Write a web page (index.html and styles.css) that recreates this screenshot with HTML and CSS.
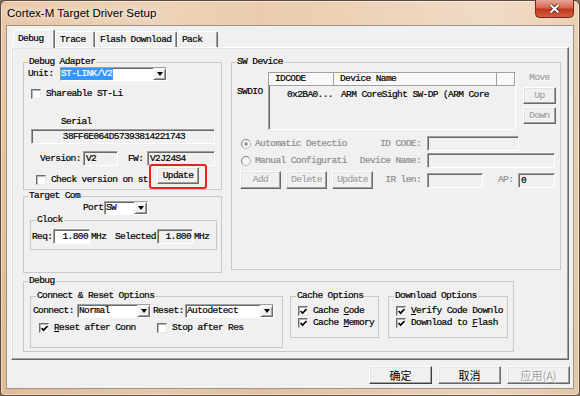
FILE: index.html
```html
<!DOCTYPE html>
<html lang="en">
  <head>
    <meta charset="UTF-8" />
    <meta name="viewport" content="width=device-width, initial-scale=1.0" />
    <title>Cortex-M Target Driver Setup</title>
    <link rel="stylesheet" href="styles.css">
  </head>

  <body>
    <div class="window">
      <div class="titlebar">
        <span class="title">Cortex-M Target Driver Setup</span>
        <div class="close-btn">
          <svg width="39" height="18" viewBox="0 0 39 18">
            <defs>
              <linearGradient id="close-bg" x1="0" y1="0" x2="0" y2="1">
                <stop offset="0" stop-color="#e9a897" />
                <stop offset="0.45" stop-color="#d66450" />
                <stop offset="0.52" stop-color="#c0361f" />
                <stop offset="1" stop-color="#d7603f" />
              </linearGradient>
            </defs>
            <path d="M0.5 0 V13.5 Q0.5 17.5 4.5 17.5 H34.5 Q38.5 17.5 38.5 13.5 V0" fill="url(#close-bg)" stroke="#6d2a1c" />
            <path d="M15.5 5 L23.5 12.5 M23.5 5 L15.5 12.5" stroke="#3b2b28" stroke-width="3.6" />
            <path d="M15.5 5 L23.5 12.5 M23.5 5 L15.5 12.5" stroke="#ffffff" stroke-width="1.9" />
          </svg>
        </div>
      </div>

      <div class="client">
        <div class="tabs">
          <div class="tab tab-debug active">Debug</div>
          <div class="tab tab-trace">Trace</div>
          <div class="tab tab-flash">Flash Download</div>
          <div class="tab tab-pack">Pack</div>
        </div>

        <div class="page">
          <div class="top-row">
            <div class="left-col">
              <fieldset class="group adapter">
                <legend>Debug Adapter</legend>
                <div class="unit-row">
                  <span class="unit-label">Unit:</span>
                  <div class="combo unit-combo">
                    <span class="combo-text"><span class="selected-text">ST-LINK/V2</span></span>
                    <span class="drop"></span>
                  </div>
                </div>
                <div class="check share-check">
                  <span class="box"></span>
                  <span class="share-text">Shareable ST-Li</span>
                </div>
                <div class="serial-label">Serial</div>
                <div class="edit ro serial">38FF6E064D57393814221743</div>
                <div class="version-row">
                  <span class="ver-label">Version:</span>
                  <div class="edit ro ver-field">V2</div>
                  <span class="fw-label">FW:</span>
                  <div class="edit ro fw-field">V2J24S4</div>
                </div>
                <div class="update-row">
                  <div class="check version-check">
                    <span class="box"></span>
                    <span class="version-text">Check version on st</span>
                  </div>
                  <div class="mark">
                    <button class="btn update-btn">Update</button>
                  </div>
                </div>
              </fieldset>

              <fieldset class="group target">
                <legend>Target Com</legend>
                <div class="port-row">
                  <span class="port-label">Port</span>
                  <div class="combo port-combo">
                    <span class="combo-text">SW</span>
                    <span class="drop"></span>
                  </div>
                </div>
                <fieldset class="group clock">
                  <legend>Clock</legend>
                  <div class="clock-row">
                    <span class="req-label">Req:</span>
                    <div class="edit num">1.800</div>
                    <span class="mhz">MHz</span>
                    <span class="sel-label">Selected</span>
                    <div class="edit ro num sel-field">1.800</div>
                    <span class="mhz">MHz</span>
                  </div>
                </fieldset>
              </fieldset>
            </div>

            <fieldset class="group sw">
              <legend>SW Device</legend>
              <div class="sw-top">
                <span class="swdio">SWDIO</span>
                <div class="listview">
                  <div class="lv-head">
                    <span class="lv-col c1">IDCODE</span>
                    <span class="lv-col c2">Device Name</span>
                    <span class="lv-col c3"></span>
                  </div>
                  <div class="lv-row">
                    <span class="c1">0x2BA0...</span>
                    <span class="c2">ARM CoreSight SW-DP (ARM Core</span>
                  </div>
                </div>
                <div class="move-col">
                  <span class="move-label">Move</span>
                  <button class="btn disabled up-btn">Up</button>
                  <button class="btn disabled down-btn">Down</button>
                </div>
              </div>

              <div class="sw-row row-auto">
                <span class="radio">
                  <svg width="10" height="10" viewBox="0 0 10 10">
                    <circle cx="5" cy="5" r="4.5" fill="#f6f6f6" stroke="#b4b4b4" />
                    <path d="M1.8 8.2 A4.5 4.5 0 0 1 8.2 1.8" fill="none" stroke="#8a8a8a" />
                    <circle cx="5" cy="5" r="1.7" fill="#8c8c8c" />
                  </svg>
                </span>
                <span class="radio-text">Automatic Detectio</span>
                <span class="sw-label">ID CODE:</span>
                <div class="edit ro id-field"></div>
              </div>
              <div class="sw-row row-manual">
                <span class="radio">
                  <svg width="10" height="10" viewBox="0 0 10 10">
                    <circle cx="5" cy="5" r="4.5" fill="#f6f6f6" stroke="#b4b4b4" />
                    <path d="M1.8 8.2 A4.5 4.5 0 0 1 8.2 1.8" fill="none" stroke="#8a8a8a" />
                  </svg>
                </span>
                <span class="radio-text">Manual Configurati</span>
                <span class="sw-label">Device Name:</span>
                <div class="edit ro name-field"></div>
              </div>
              <div class="sw-row row-buttons">
                <button class="btn disabled sw-btn">Add</button>
                <button class="btn disabled sw-btn">Delete</button>
                <button class="btn disabled sw-btn">Update</button>
                <span class="sw-label ir-label">IR len:</span>
                <div class="edit ro ir-field"></div>
                <span class="ap-label">AP:</span>
                <div class="edit ro ap-field">0</div>
              </div>
            </fieldset>
          </div>

          <fieldset class="group debug">
            <legend>Debug</legend>
            <div class="debug-body">
              <fieldset class="group connect">
                <legend>Connect &amp; Reset Options</legend>
                <div class="connect-row">
                  <span class="connect-label">Connect:</span>
                  <div class="combo normal-combo">
                    <span class="combo-text">Normal</span>
                    <span class="drop"></span>
                  </div>
                  <span class="reset-label">Reset:</span>
                  <div class="combo auto-combo">
                    <span class="combo-text">Autodetect</span>
                    <span class="drop"></span>
                  </div>
                </div>
                <div class="reset-row">
                  <div class="check">
                    <span class="box">
                      <svg width="7" height="7" viewBox="0 0 7 7"><path d="M0.6 3 L2.6 5.2 L6.6 1" fill="none" stroke="#000" stroke-width="1.7" /></svg>
                    </span>
                    <span class="reset-text"><u>R</u>eset after Conn</span>
                  </div>
                  <div class="check stop-check">
                    <span class="box"></span>
                    <span class="stop-text">Stop after Res</span>
                  </div>
                </div>
              </fieldset>

              <fieldset class="group cache">
                <legend>Cache Options</legend>
                <div class="check-list">
                  <div class="check">
                    <span class="box">
                      <svg width="7" height="7" viewBox="0 0 7 7"><path d="M0.6 3 L2.6 5.2 L6.6 1" fill="none" stroke="#000" stroke-width="1.7" /></svg>
                    </span>
                    <span>Cache <u>C</u>ode</span>
                  </div>
                  <div class="check">
                    <span class="box">
                      <svg width="7" height="7" viewBox="0 0 7 7"><path d="M0.6 3 L2.6 5.2 L6.6 1" fill="none" stroke="#000" stroke-width="1.7" /></svg>
                    </span>
                    <span>Cache <u>M</u>emory</span>
                  </div>
                </div>
              </fieldset>

              <fieldset class="group download">
                <legend>Download Options</legend>
                <div class="check-list">
                  <div class="check">
                    <span class="box">
                      <svg width="7" height="7" viewBox="0 0 7 7"><path d="M0.6 3 L2.6 5.2 L6.6 1" fill="none" stroke="#000" stroke-width="1.7" /></svg>
                    </span>
                    <span><u>V</u>erify Code Downlo</span>
                  </div>
                  <div class="check">
                    <span class="box">
                      <svg width="7" height="7" viewBox="0 0 7 7"><path d="M0.6 3 L2.6 5.2 L6.6 1" fill="none" stroke="#000" stroke-width="1.7" /></svg>
                    </span>
                    <span>Download to <u>F</u>lash</span>
                  </div>
                </div>
              </fieldset>
            </div>
          </fieldset>
        </div>

        <div class="buttons">
          <button class="btn cn default">确定</button>
          <button class="btn cn">取消</button>
          <button class="btn cn disabled">应用(A)</button>
        </div>
      </div>
    </div>
  </body>
</html>
```

FILE: styles.css
```css
* {
  box-sizing: border-box;
}

body {
  margin: 0;
  width: 580px;
  height: 396px;
  overflow: hidden;
  background: #7d6a58;
}

.window {
  display: flex;
  flex-direction: column;
  width: 580px;
  height: 396px;
  padding: 0 5px 6px 5px;
  border: 1px solid #5e4b3c;
  border-radius: 6px 6px 4px 4px;
  background:
    linear-gradient(90deg, rgba(255, 255, 255, 0) 0%, rgba(255, 255, 255, 0.2) 28%, rgba(255, 255, 255, 0.08) 45%, rgba(255, 255, 255, 0.35) 85%, rgba(255, 255, 255, 0.15) 100%),
    linear-gradient(#e9c8a8, #e6c4a2 30%, #dfbb98);
  box-shadow: inset 0 0 0 1px rgba(255, 255, 255, 0.45);
}

.titlebar {
  display: flex;
  flex-shrink: 0;
  height: 24px;
}

.title {
  padding-left: 1px;
  font: 11.5px/24px "Liberation Sans", Arial, sans-serif;
  color: #000;
  text-shadow: 0 0 6px #fff, 0 0 10px rgba(255, 255, 255, 0.8);
}

.close-btn {
  width: 39px;
  height: 18px;
  margin: -1px 0 0 auto;
}

.close-btn svg {
  display: block;
}

.client {
  flex: 1;
  display: flex;
  flex-direction: column;
  border: 1px solid #a29384;
  background: #f0f0f0;
  font-family: "Liberation Mono", "DejaVu Sans Mono", monospace;
  font-size: 9.5px;
  line-height: 12px;
  letter-spacing: -0.6px;
  -webkit-text-stroke-width: 0.2px;
  color: #000;
}

/* tabs */

.tabs {
  display: flex;
  align-items: flex-end;
  flex-shrink: 0;
  height: 21px;
  padding-left: 6px;
}

.tab {
  height: 16px;
  padding-left: 4px;
  border: 1px solid;
  border-color: #fff #696969 transparent #fff;
  border-bottom: 0;
  border-radius: 2px 2px 0 0;
  box-shadow: inset -1px 0 #a0a0a0;
  line-height: 16px;
  white-space: nowrap;
}

.tab.active {
  position: relative;
  z-index: 1;
  height: 19px;
  margin-bottom: -1px;
  background: #f0f0f0;
  line-height: 17px;
}

.tab-debug {
  width: 42px;
}

.tab-trace {
  width: 40px;
}

.tab-flash {
  width: 82px;
}

.tab-pack {
  width: 41px;
}

.page {
  flex-shrink: 0;
  height: 313px;
  margin: 0 4px;
  padding: 9px 0 0 11px;
  border: 1px solid;
  border-color: #fff #696969 #696969 #fff;
  box-shadow: inset -1px -1px #a0a0a0, inset 1px 1px #e3e3e3;
}

/* common controls */

.group {
  margin: 0;
  padding: 0;
  min-width: 0;
  border: 1px solid #c8c8c8;
}

.group legend {
  margin-left: 4px;
  padding: 0 1px;
  line-height: 10px;
}

.combo {
  display: flex;
  height: 14px;
  border: 1px solid;
  border-color: #a0a0a0 #fff #fff #a0a0a0;
  box-shadow: inset 1px 1px #696969;
  background: #fff;
}

.combo-text {
  flex: 1;
  padding-left: 1px;
  line-height: 12px;
  overflow: hidden;
  white-space: nowrap;
}

.selected-text {
  display: inline-block;
  height: 12px;
  padding-right: 1px;
  background: #3399ff;
  color: #fff;
}

.drop {
  display: flex;
  align-items: center;
  justify-content: center;
  width: 13px;
  height: 12px;
  border: 1px solid;
  border-color: #f0f0f0 #696969 #696969 #f0f0f0;
  box-shadow: inset 1px 1px #fff, inset -1px -1px #a0a0a0;
  background: #f0f0f0;
}

.drop::after {
  content: "";
  border-left: 3.5px solid transparent;
  border-right: 3.5px solid transparent;
  border-top: 4px solid #000;
}

.edit {
  height: 15px;
  padding-left: 2px;
  border: 1px solid;
  border-color: #a0a0a0 #fff #fff #a0a0a0;
  box-shadow: inset 1px 1px #696969;
  background: #fff;
  line-height: 13px;
  white-space: nowrap;
  overflow: hidden;
}

.edit.ro {
  background: #f0f0f0;
}

.btn {
  display: flex;
  align-items: center;
  justify-content: center;
  padding: 0;
  border: 1px solid;
  border-color: #fff #696969 #696969 #fff;
  border-radius: 0;
  box-shadow: inset -1px -1px #a0a0a0, inset 1px 1px #e3e3e3;
  background: #f0f0f0;
  font: inherit;
  letter-spacing: inherit;
  color: #000;
  appearance: none;
}

.btn.disabled {
  color: #a0a0a0;
  text-shadow: 1px 1px #fff;
}

.check {
  display: flex;
  align-items: center;
  gap: 5px;
  white-space: nowrap;
}

.box {
  display: flex;
  align-items: center;
  justify-content: center;
  flex-shrink: 0;
  width: 10px;
  height: 10px;
  border: 1px solid;
  border-color: #6e6e6e #e6e6e6 #e6e6e6 #6e6e6e;
  box-shadow: inset 1px 1px #b4b4b4;
  background: #fff;
}

.box svg {
  display: block;
}

/* layout */

.top-row {
  display: flex;
  align-items: flex-start;
  gap: 9px;
}

.left-col {
  display: flex;
  flex-direction: column;
  flex-shrink: 0;
  width: 199px;
}

/* debug adapter */

.adapter {
  width: 199px;
}

.unit-row {
  display: flex;
  height: 14px;
  margin-left: 4px;
}

.unit-label {
  width: 32px;
  line-height: 14px;
}

.unit-combo {
  width: 107px;
}

.unit-combo .combo-text {
  padding-left: 0;
}

.share-check {
  height: 10px;
  margin: 8px 0 0 7px;
}

.serial-label {
  height: 12px;
  margin: 17px 0 0 37px;
}

.serial {
  width: 184px;
  margin: 1px 0 0 7px;
  text-align: center;
}

.version-row {
  display: flex;
  height: 15px;
  margin: 7px 0 0 16px;
  line-height: 15px;
}

.ver-label {
  width: 43px;
}

.ver-field {
  width: 35px;
}

.fw-label {
  width: 19px;
  margin-left: 10px;
}

.fw-field {
  width: 68px;
}

.update-row {
  display: flex;
  align-items: flex-start;
  margin: -2px 0 0 12px;
}

.version-check {
  margin-top: 10px;
}

.version-text {
  width: 97px;
}

.mark {
  margin-left: 1px;
  padding: 1px 6px 3px;
  border: 2px solid #e8231f;
  border-radius: 3px;
}

.update-btn {
  width: 42px;
  height: 17px;
}

/* target com */

.target {
  width: 199px;
  margin-top: 1px;
  padding-bottom: 22px;
}

.port-row {
  display: flex;
  height: 14px;
  margin-left: 59px;
}

.port-label {
  width: 21px;
  line-height: 14px;
}

.port-combo {
  width: 44px;
}

.clock {
  width: 187px;
  margin-left: 6px;
  padding-bottom: 5px;
}

.clock legend {
  margin-left: 5px;
}

.clock-row {
  display: flex;
  height: 15px;
  margin: 4px 0 0 1px;
  line-height: 15px;
}

.req-label {
  width: 21px;
}

.num {
  width: 37px;
  padding-right: 1px;
  text-align: right;
}

.mhz {
  width: 16px;
  margin-left: 1px;
}

.sel-label {
  width: 42px;
  margin-left: 8px;
  white-space: nowrap;
}

.sel-field {
  width: 36px;
}

/* sw device */

.sw {
  width: 330px;
  padding-bottom: 80px;
}

.sw-top {
  display: flex;
  margin-top: 5px;
  padding-left: 5px;
}

.swdio {
  width: 31px;
  padding-top: 14px;
}

.listview {
  width: 248px;
  height: 58px;
  border: 1px solid;
  border-color: #a0a0a0 #fff #fff #a0a0a0;
  box-shadow: inset 1px 1px #696969;
  background: #f0f0f0;
  overflow: hidden;
}

.lv-head {
  display: flex;
  height: 13px;
  border-bottom: 1px solid #a0a0a0;
  background: #f8f8f8;
}

.lv-col {
  padding-left: 6px;
  border-right: 1px solid #a0a0a0;
  line-height: 12px;
}

.c1 {
  width: 65px;
}

.c2 {
  width: 163px;
}

.c3 {
  width: 18px;
}

.lv-row {
  display: flex;
  margin-top: 3px;
  white-space: nowrap;
}

.lv-row .c1 {
  padding-left: 18px;
}

.lv-row .c2 {
  padding-left: 7px;
}

.move-col {
  display: flex;
  flex-direction: column;
  width: 33px;
  margin-left: 7px;
}

.move-label {
  line-height: 11px;
  text-align: center;
  color: #a0a0a0;
  text-shadow: 1px 1px #fff;
}

.up-btn {
  height: 17px;
  margin-top: 4px;
}

.down-btn {
  height: 17px;
  margin-top: 3px;
}

.sw-row {
  display: flex;
  align-items: center;
  color: #8e8e8e;
}

.row-auto {
  height: 15px;
  margin-top: 6px;
  padding-left: 9px;
}

.row-manual {
  height: 15px;
  margin-top: 2px;
  padding-left: 9px;
}

.row-buttons {
  height: 18px;
  margin-top: 3px;
  padding-left: 8px;
}

.radio {
  display: flex;
  width: 10px;
  height: 10px;
}

.radio-text {
  width: 91px;
  margin-left: 4px;
  white-space: nowrap;
}

.sw-label {
  width: 81px;
  padding-right: 6px;
  text-align: right;
  white-space: nowrap;
}

.id-field {
  width: 92px;
}

.name-field {
  width: 128px;
}

.sw-btn {
  width: 41px;
  height: 18px;
  margin-right: 5px;
}

.sw-btn:nth-of-type(3) {
  margin-right: 0;
}

.ir-label {
  width: 54px;
}

.ir-field {
  width: 56px;
}

.ap-label {
  width: 20px;
  margin-left: 15px;
}

.ap-field {
  width: 37px;
  color: #000;
}

/* debug options */

.debug {
  width: 491px;
  margin-top: 3px;
}

.debug-body {
  display: flex;
  align-items: flex-start;
  margin-top: 5px;
  padding: 0 0 3px 6px;
}

.connect {
  width: 253px;
  padding-bottom: 14px;
}

.connect legend,
.cache legend,
.download legend {
  margin-left: 5px;
}

.connect-row {
  display: flex;
  align-items: center;
  height: 14px;
  margin-top: 3px;
  line-height: 14px;
}

.connect-label {
  width: 42px;
  margin-left: 2px;
}

.normal-combo {
  width: 74px;
  margin-left: 2px;
}

.reset-label {
  width: 31px;
  margin-left: 2px;
}

.auto-combo {
  width: 89px;
  margin-left: 1px;
}

.reset-row {
  display: flex;
  height: 10px;
  margin: 5px 0 0 8px;
}

.reset-text {
  width: 82px;
}

.stop-check {
  margin-left: 21px;
}

.cache {
  width: 89px;
  margin-left: 7px;
  padding-bottom: 8px;
}

.download {
  width: 120px;
  margin-left: 9px;
  padding-bottom: 8px;
}

.check-list {
  margin: 4px 0 0 7px;
}

.check-list .check {
  height: 12px;
}

/* dialog buttons */

.buttons {
  display: flex;
  justify-content: flex-end;
  gap: 6px;
  margin-top: 6px;
  padding-right: 3px;
}

.btn.cn {
  width: 63px;
  height: 18px;
  font-family: "Noto Sans CJK SC", sans-serif;
  font-size: 11px;
  letter-spacing: 0;
  -webkit-text-stroke-width: 0;
}

.btn.default {
  border-color: #fff #404040 #404040 #fff;
}
```
